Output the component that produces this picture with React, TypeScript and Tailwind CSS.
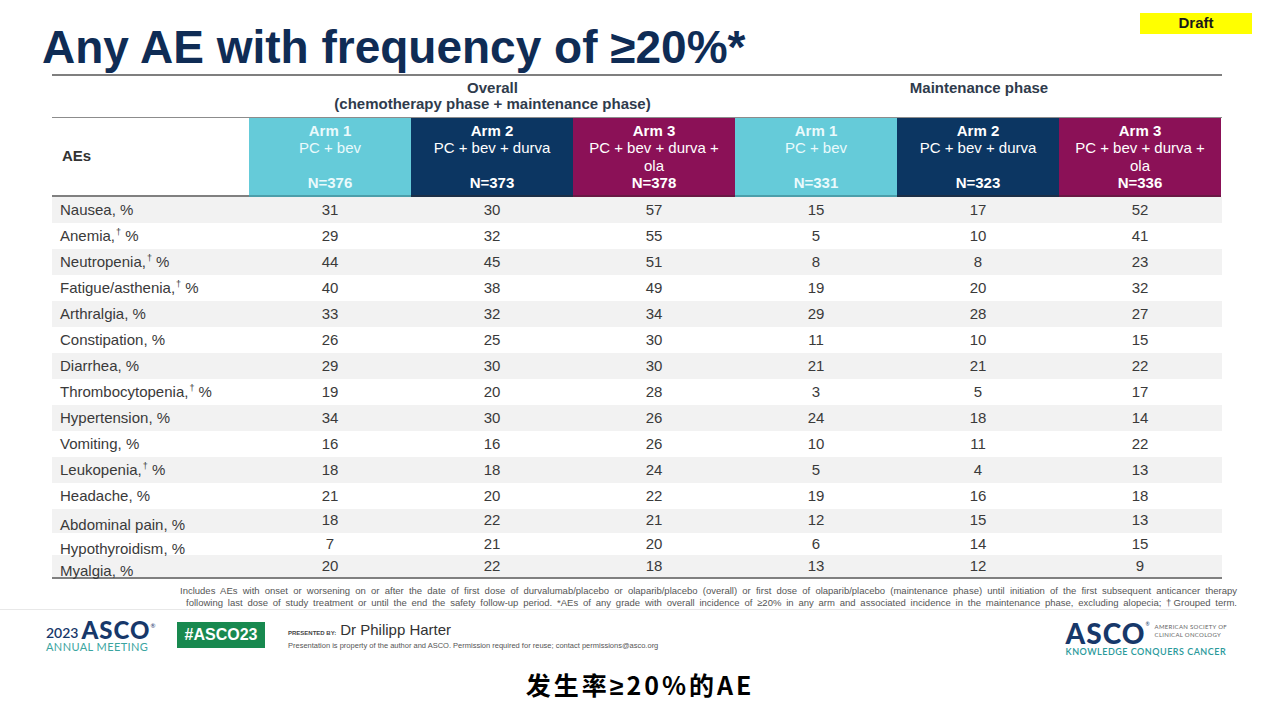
import React from 'react';

type Row = { name: string; dagger?: boolean; values: number[] };

const rows: Row[] = [
  { name: 'Nausea', values: [31, 30, 57, 15, 17, 52] },
  { name: 'Anemia', dagger: true, values: [29, 32, 55, 5, 10, 41] },
  { name: 'Neutropenia', dagger: true, values: [44, 45, 51, 8, 8, 23] },
  { name: 'Fatigue/asthenia', dagger: true, values: [40, 38, 49, 19, 20, 32] },
  { name: 'Arthralgia', values: [33, 32, 34, 29, 28, 27] },
  { name: 'Constipation', values: [26, 25, 30, 11, 10, 15] },
  { name: 'Diarrhea', values: [29, 30, 30, 21, 21, 22] },
  { name: 'Thrombocytopenia', dagger: true, values: [19, 20, 28, 3, 5, 17] },
  { name: 'Hypertension', values: [34, 30, 26, 24, 18, 14] },
  { name: 'Vomiting', values: [16, 16, 26, 10, 11, 22] },
  { name: 'Leukopenia', dagger: true, values: [18, 18, 24, 5, 4, 13] },
  { name: 'Headache', values: [21, 20, 22, 19, 16, 18] },
  { name: 'Abdominal pain', values: [18, 22, 21, 12, 15, 13] },
  { name: 'Hypothyroidism', values: [7, 21, 20, 6, 14, 15] },
  { name: 'Myalgia', values: [20, 22, 18, 13, 12, 9] },
];

const rowHeights = [
  'h-[26px]', 'h-[26px]', 'h-[26px]', 'h-[26px]', 'h-[26px]', 'h-[26px]',
  'h-[26px]', 'h-[26px]', 'h-[26px]', 'h-[26px]', 'h-[26px]', 'h-[26px]',
  'h-[24px]', 'h-[22px]', 'h-[22px]',
];

const arms = [
  { arm: 'Arm 1', l1: 'PC + bev', l2: '', n: 'N=376', cls: 'bg-[#65cbd9] text-[#eafafc] border-[#4c9fab]' },
  { arm: 'Arm 2', l1: 'PC + bev + durva', l2: '', n: 'N=373', cls: 'bg-[#0c3662] text-white border-[#1c2f47]' },
  { arm: 'Arm 3', l1: 'PC + bev + durva +', l2: 'ola', n: 'N=378', cls: 'bg-[#8b1157] text-white border-[#6a1944]' },
  { arm: 'Arm 1', l1: 'PC + bev', l2: '', n: 'N=331', cls: 'bg-[#65cbd9] text-[#eafafc] border-[#4c9fab]' },
  { arm: 'Arm 2', l1: 'PC + bev + durva', l2: '', n: 'N=323', cls: 'bg-[#0c3662] text-white border-[#1c2f47]' },
  { arm: 'Arm 3', l1: 'PC + bev + durva +', l2: 'ola', n: 'N=336', cls: 'bg-[#8b1157] text-white border-[#6a1944]' },
];

const grid = 'grid grid-cols-[197px_repeat(6,162px)]';

export default function App() {
  return (
    <div className="w-[1280px] h-[720px] bg-white overflow-hidden font-['Liberation_Sans',Arial,sans-serif]">
      {/* Title + draft tag */}
      <div className="flex items-start justify-between pl-[42px] pr-[28px] pt-[13px]">
        <h1 className="mt-[11px] text-[46px] leading-[46px] font-bold text-[#0f2c55]">
          Any AE with frequency of ≥20%*
        </h1>
        <div className="w-[112px] h-[21px] bg-[#ffff00] flex items-center justify-center text-[15px] font-bold text-[#1a1a1a]">
          Draft
        </div>
      </div>

      <div className="ml-[52px] w-[1170px]">
        <div className="mt-[4px] h-[2px] bg-[#7f7f7f]" />

        {/* Phase headers */}
        <div className="grid grid-cols-[197px_487px_486px] pt-[4px] pb-[5px] text-[15px] leading-[16px] font-bold text-[#2f3b4c]">
          <div />
          <div className="text-center">
            <div>Overall</div>
            <div>(chemotherapy phase + maintenance phase)</div>
          </div>
          <div className="text-center">Maintenance phase</div>
        </div>

        {/* Arm header */}
        <div className={`${grid} border-t border-[#8c8c8c]`}>
          <div className="h-[79px] border-b-2 border-[#808080] flex items-center pl-[10px] text-[15px] font-bold text-[#333]">
            AEs
          </div>
          {arms.map((a, i) => (
            <div
              key={i}
              className={`h-[79px] border-b-2 flex flex-col items-center justify-center text-[15px] leading-[17.5px] ${a.cls}`}
            >
              <div className="font-bold">{a.arm}</div>
              <div>{a.l1}</div>
              <div>{a.l2 || '\u00a0'}</div>
              <div className="font-bold">{a.n}</div>
            </div>
          ))}
        </div>

        {/* Data rows */}
        <div className="border-b-2 border-[#808080]">
          {rows.map((r, i) => {
            const tight = i >= 12;
            return (
              <div
                key={r.name}
                className={`${grid} ${rowHeights[i]} ${i % 2 === 0 ? 'bg-[#f2f2f2]' : 'bg-white'} text-[15px] text-[#3a3a3a]`}
              >
                <div className={`flex items-center pl-[8px] ${tight ? 'pt-[5px]' : ''}`}>
                  {r.name},{r.dagger && <sup className="text-[9px] ml-[1px]">†</sup>}&nbsp;%
                </div>
                {r.values.map((v, j) => (
                  <div key={j} className={`flex items-center justify-center ${tight ? 'pb-[5px]' : ''}`}>
                    {v}
                  </div>
                ))}
              </div>
            );
          })}
        </div>
      </div>

      {/* Footnote */}
      <div className="mt-[6px] ml-[180px] w-[1057px] text-[9.5px] leading-[12px] text-[#555]">
        <div className="text-justify [text-align-last:justify]">
          Includes AEs with onset or worsening on or after the date of first dose of durvalumab/placebo or olaparib/placebo (overall) or first dose of olaparib/placebo (maintenance phase) until initiation of the first subsequent anticancer therapy
        </div>
        <div className="pl-[6px] text-justify [text-align-last:justify]">
          following last dose of study treatment or until the end the safety follow-up period. *AEs of any grade with overall incidence of ≥20% in any arm and associated incidence in the maintenance phase, excluding alopecia; †Grouped term.
        </div>
      </div>
      <div className="w-[1228px] h-px bg-[#e8e8e8]" />

      {/* Footer */}
      <div className="flex items-start pt-[11px] h-[52px]">
        <div className="ml-[46px] w-[106px] font-['Lato',sans-serif]">
          <div className="flex items-end text-[#17386a] h-[19px]">
            <span className="text-[14px] leading-[14px] font-semibold">2023</span>
            <span className="ml-[3px] text-[24px] leading-[20px] font-black tracking-[1px]">ASCO</span>
            <span className="text-[6px] self-start">®</span>
          </div>
          <div className="mt-[1px] text-[11px] leading-[12px] tracking-[0.4px] text-[#3ba59f] whitespace-nowrap">ANNUAL MEETING</div>
        </div>
        <div className="ml-[25px] mt-[1px] w-[88px] h-[26px] bg-[#18894f] flex items-center justify-center text-white font-bold text-[16px]">
          #ASCO23
        </div>
        <div className="ml-[23px]">
          <div className="flex items-baseline">
            <span className="text-[6px] font-bold text-[#444]">PRESENTED BY:</span>
            <span className="ml-[4px] text-[15px] leading-[18px] text-[#333]">Dr Philipp Harter</span>
          </div>
          <div className="mt-[1px] text-[7.5px] text-[#555]">
            Presentation is property of the author and ASCO. Permission required for reuse; contact permissions@asco.org
          </div>
        </div>
        <div className="ml-auto mr-[53px] font-['Lato',sans-serif]">
          <div className="flex items-start">
            <span className="text-[28px] leading-[24px] font-black text-[#17386a] tracking-[1px]">ASCO</span>
            <span className="text-[5px] text-[#17386a]">®</span>
            <div className="ml-[5px] mt-[2px] text-[6px] leading-[8px] text-[#666] tracking-[0.3px]">
              <div>AMERICAN SOCIETY OF</div>
              <div>CLINICAL ONCOLOGY</div>
            </div>
          </div>
          <div className="mt-[2px] text-[9px] leading-[10px] font-semibold tracking-[0.5px] text-[#2a9a9b] whitespace-nowrap">
            KNOWLEDGE CONQUERS CANCER
          </div>
        </div>
      </div>

      {/* Caption */}
      <div className="mt-[8px] text-center text-[25px] leading-[28px] font-bold tracking-[3px] text-black font-['Noto_Sans_CJK_SC',sans-serif]">
        发生率<span className="font-['Liberation_Sans',sans-serif]">≥</span>20%的AE
      </div>
    </div>
  );
}
